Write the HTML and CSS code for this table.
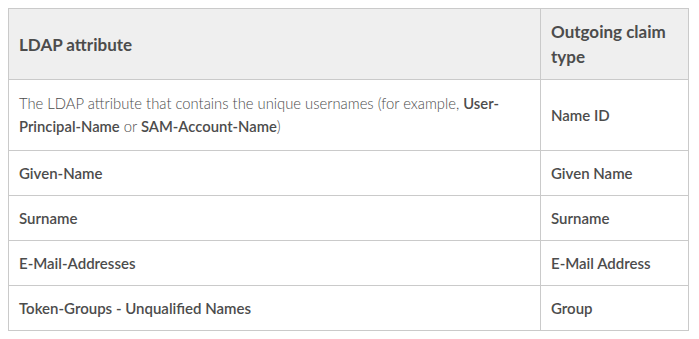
FILE: index.html
```html
<!DOCTYPE html>
<html lang="en">
<head>
    <meta charset="UTF-8">
    <title>LDAP claims</title>
    <link rel="stylesheet" href="styles.css">
</head>
<body>
    <table class="claims-table">
        <thead>
            <tr>
                <th class="col-attr">LDAP attribute</th>
                <th class="col-claim">Outgoing claim type</th>
            </tr>
        </thead>
        <tbody>
            <tr class="row-tall">
                <td class="desc">The LDAP attribute that contains the unique usernames (for example, <b>User-Principal-Name</b> or <b>SAM-Account-Name</b>)</td>
                <td>Name ID</td>
            </tr>
            <tr>
                <td>Given-Name</td>
                <td>Given Name</td>
            </tr>
            <tr>
                <td>Surname</td>
                <td>Surname</td>
            </tr>
            <tr>
                <td>E-Mail-Addresses</td>
                <td>E-Mail Address</td>
            </tr>
            <tr>
                <td>Token-Groups - Unqualified Names</td>
                <td>Group</td>
            </tr>
        </tbody>
    </table>
</body>
</html>
```
FILE: styles.css
```css
* {
    margin: 0;
    padding: 0;
    box-sizing: border-box;
}
body {
    font-family: Lato, "Open Sans", sans-serif;
    background-color: white;
    padding: 8px;
    color: #4c4c4c;
}
.claims-table {
    width: 681px;
    border-collapse: collapse;
    font-size: 15px;
}
.claims-table th, .claims-table td {
    border: 1px solid #cacaca;
    text-align: left;
    vertical-align: middle;
    padding: 11px 10px;
    line-height: 22px;
}
.claims-table th {
    background-color: #efefef;
    font-weight: 700;
    font-size: 17px;
    line-height: 25px;
    padding: 10px 10px;
    height: 71px;
}
.col-attr {
    width: 532px;
}
.claims-table td {
    height: 45px;
    font-weight: 600;
}
.claims-table .desc {
    font-weight: 300;
    font-size: 14.8px;
    line-height: 23px;
    height: 71px;
}
.desc b {
    font-weight: 600;
}
```
